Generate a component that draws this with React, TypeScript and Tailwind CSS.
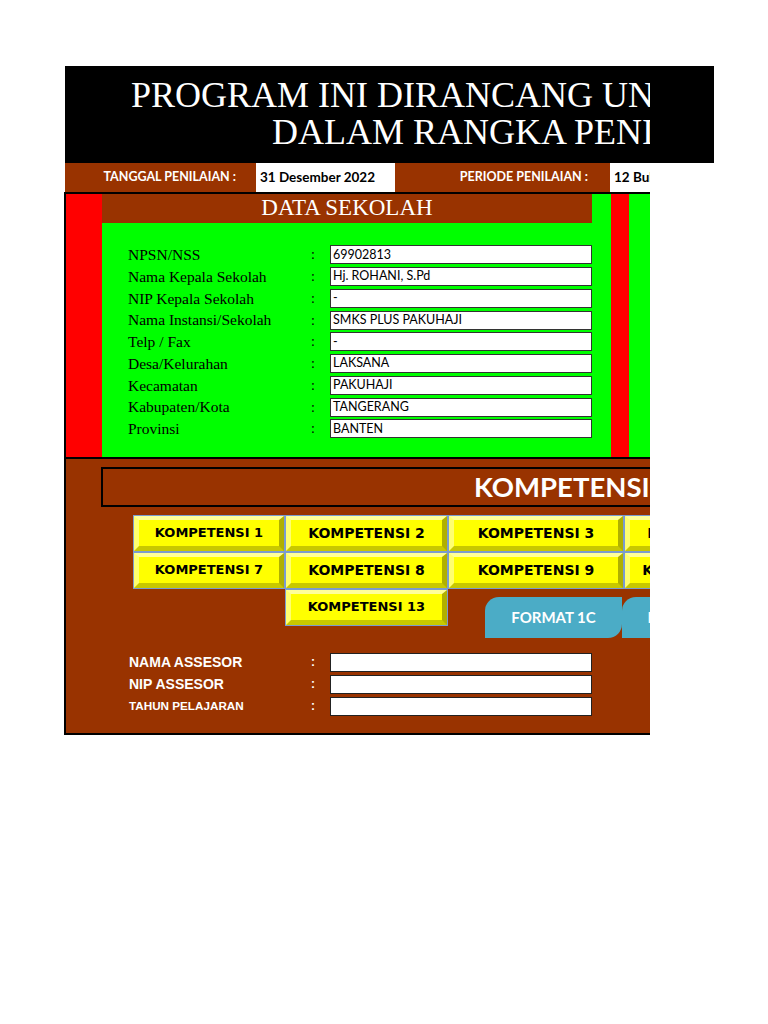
import React from "react";

const schoolRows: [string, string][] = [
  ["NPSN/NSS", "69902813"],
  ["Nama Kepala Sekolah", "Hj. ROHANI, S.Pd"],
  ["NIP Kepala Sekolah", "-"],
  ["Nama Instansi/Sekolah", "SMKS PLUS PAKUHAJI"],
  ["Telp / Fax", "-"],
  ["Desa/Kelurahan", "LAKSANA"],
  ["Kecamatan", "PAKUHAJI"],
  ["Kabupaten/Kota", "TANGERANG"],
  ["Provinsi", "BANTEN"],
];

function BevelButton({
  label,
  width,
  size,
}: {
  label: string;
  width: string;
  size: string;
}) {
  return (
    <div className={`${width} h-[37px] shrink-0 border border-[#7b9ccf] bg-[#7b9ccf]`}>
      <div
        className={`flex h-full items-center justify-center whitespace-nowrap border-t-[4px] border-r-[5px] border-b-[5px] border-l-[5px] border-t-[#ffff99] border-r-[#b0b000] border-b-[#c8c800] border-l-[#ffff70] bg-[#ffff00] font-['DejaVu_Sans',sans-serif] font-bold text-black ${size}`}
      >
        {label}
      </div>
    </div>
  );
}

export default function App() {
  return (
    <div className="min-h-screen bg-white pt-[66px] pl-[64px]">
      {/* Title banner */}
      <div className="ml-px h-[97px] w-[649px] bg-black">
        <div className="w-[585px] overflow-hidden whitespace-nowrap pt-[11px] font-['Liberation_Serif',serif] text-[36px] leading-[37px] text-white">
          <div className="pl-[66px]">PROGRAM INI DIRANCANG UNTUK MEMUDAHKAN GURU</div>
          <div className="pl-[207px]">DALAM RANGKA PENILAIAN KINERJA</div>
        </div>
      </div>

      {/* Tanggal / periode */}
      <div className="ml-px flex h-[29px] w-[585px] overflow-hidden whitespace-nowrap font-['Lato',sans-serif] font-bold">
        <div className="flex w-[191px] shrink-0 items-center justify-end bg-[#993300] pr-[20px] text-[12.5px] text-white">
          TANGGAL PENILAIAN :
        </div>
        <div className="flex w-[139px] shrink-0 items-center bg-white pl-[4px] text-[13.5px] text-black">
          31 Desember 2022
        </div>
        <div className="flex w-[215px] shrink-0 items-center justify-end bg-[#993300] pr-[22px] text-[12.5px] text-white">
          PERIODE PENILAIAN :
        </div>
        <div className="flex w-[120px] shrink-0 items-center bg-white pl-[4px] text-[13.5px] text-black">
          12 Bulan
        </div>
      </div>

      {/* Data sekolah */}
      <div className="flex h-[265px] w-[586px] overflow-hidden border-t-2 border-l-2 border-black">
        <div className="w-[36px] shrink-0 bg-[#ff0000]" />
        <div className="w-[509px] shrink-0 bg-[#00ff00]">
          <div className="flex h-[29px] w-[490px] items-center justify-center bg-[#993300] font-['Liberation_Serif',serif] text-[23px] text-white">
            DATA SEKOLAH
          </div>
          <div className="pt-[21px]">
            {schoolRows.map(([label, value]) => (
              <div key={label} className="flex h-[21.75px] items-center">
                <div className="w-[209px] pl-[26px] font-['Liberation_Serif',serif] text-[15.5px] leading-none text-black">
                  {label}
                </div>
                <div className="w-[19px] font-['Liberation_Serif',serif] text-[14px] text-black">:</div>
                <div className="flex h-[19px] w-[262px] items-center border border-[#333] bg-white pl-[2px] font-['Lato',sans-serif] text-[12.5px] text-black">
                  {value}
                </div>
              </div>
            ))}
          </div>
        </div>
        <div className="w-[18px] shrink-0 bg-[#ff0000]" />
        <div className="flex-1 bg-[#00ff00]" />
      </div>

      {/* Kompetensi */}
      <div className="h-[278px] w-[586px] overflow-hidden border-y-2 border-l-2 border-black bg-[#993300] pt-[8px]">
        <div className="ml-[35px] flex h-[40px] w-[640px] items-center border-2 border-black pl-[371px] font-['Lato',sans-serif] text-[27.5px] font-bold text-white">
          KOMPETENSI
        </div>

        <div className="mt-[8px] ml-[67px] flex flex-col">
          <div className="flex">
            <BevelButton label="KOMPETENSI 1" width="w-[152px]" size="text-[13px]" />
            <BevelButton label="KOMPETENSI 2" width="w-[163px]" size="text-[14px]" />
            <BevelButton label="KOMPETENSI 3" width="w-[176px]" size="text-[14px]" />
            <BevelButton label="KOMPETENSI 4" width="w-[163px]" size="text-[14px]" />
          </div>
          <div className="flex">
            <BevelButton label="KOMPETENSI 7" width="w-[152px]" size="text-[13px]" />
            <BevelButton label="KOMPETENSI 8" width="w-[163px]" size="text-[14px]" />
            <BevelButton label="KOMPETENSI 9" width="w-[176px]" size="text-[14px]" />
            <BevelButton label="KOMPETENSI 10" width="w-[163px]" size="text-[14px]" />
          </div>
          <div className="flex items-start">
            <div className="w-[152px] shrink-0" />
            <BevelButton label="KOMPETENSI 13" width="w-[163px]" size="text-[13px]" />
            <div className="mt-[8px] ml-[37px] flex">
              <div className="flex h-[41px] w-[137px] shrink-0 items-center justify-center rounded-tl-[14px] rounded-br-[14px] bg-[#4bacc6] font-['Lato',sans-serif] text-[15px] font-bold text-white">
                FORMAT 1C
              </div>
              <div className="flex h-[41px] w-[137px] shrink-0 items-center justify-center rounded-tl-[14px] rounded-br-[14px] bg-[#4bacc6] font-['Lato',sans-serif] text-[15px] font-bold text-white">
                FORMAT 1D
              </div>
            </div>
          </div>
        </div>

        {/* Assesor */}
        <div className="mt-[13px]">
          {[
            ["NAMA ASSESOR", "text-[14px]"],
            ["NIP ASSESOR", "text-[14px]"],
            ["TAHUN PELAJARAN", "text-[11.7px]"],
          ].map(([label, size]) => (
            <div key={label} className="flex h-[22px] items-center">
              <div className={`w-[245px] pl-[63px] font-['Liberation_Sans',sans-serif] font-bold text-white ${size}`}>
                {label}
              </div>
              <div className="w-[19px] font-['Liberation_Sans',sans-serif] text-[12px] font-bold text-white">:</div>
              <div className="h-[19px] w-[262px] border border-[#222] bg-white" />
            </div>
          ))}
        </div>
      </div>
    </div>
  );
}
